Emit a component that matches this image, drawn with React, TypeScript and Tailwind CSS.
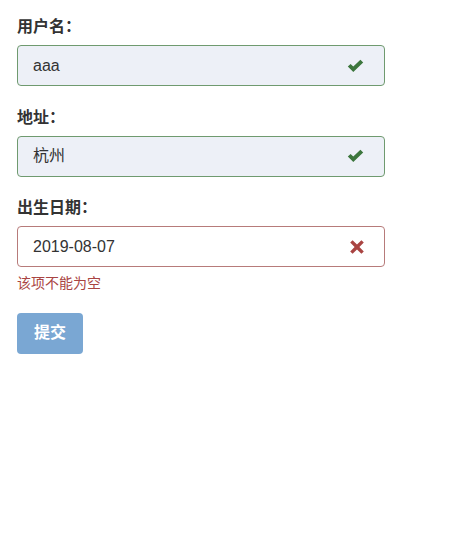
import React from 'react';

const font = { fontFamily: '"Liberation Sans", "Noto Sans CJK SC", sans-serif' };

const OkIcon = () => (
  <svg width="17" height="14" viewBox="0 0 17 14" className="text-[#3c763d]">
    <path d="M0.8 7.6 L3.6 4.9 L6.3 7.5 L13.4 0.8 L16.2 3.5 L6.3 12.9 Z" fill="currentColor" />
  </svg>
);

const RemoveIcon = () => (
  <svg width="14" height="14" viewBox="0 0 14 14" className="text-[#a94442]">
    <path d="M2.6 0.2 L7 4.6 L11.4 0.2 L13.8 2.6 L9.4 7 L13.8 11.4 L11.4 13.8 L7 9.4 L2.6 13.8 L0.2 11.4 L4.6 7 L0.2 2.6 Z" fill="currentColor" />
  </svg>
);

const Field = ({
  label,
  value,
  ok,
  error,
}: {
  label: string;
  value: string;
  ok: boolean;
  error?: string;
}) => (
  <div className="mb-[21.5px]">
    <label className="block text-[16px] leading-[20px] font-bold text-[#333] mb-[8px]">{label}</label>
    <div
      className={
        ok
          ? 'flex items-center h-[41px] rounded-[4px] border border-[#6f9a6f] bg-[#edf0f7] pl-[15px] pr-[20px]'
          : 'flex items-center h-[41px] rounded-[4px] border border-[#b77b7a] bg-white pl-[15px] pr-[20px]'
      }
    >
      <span className="flex-1 text-[16px] text-[#333]">{value}</span>
      {ok ? <OkIcon /> : <RemoveIcon />}
    </div>
    {error && <div className="mt-[6px] text-[14px] leading-[20px] text-[#a94442]">{error}</div>}
  </div>
);

export default function App() {
  return (
    <div className="min-h-screen bg-white pt-[17px] px-[17px]" style={font}>
      <div className="w-[368px]">
        <Field label="用户名：" value="aaa" ok />
        <Field label="地址：" value="杭州" ok />
        <Field label="出生日期：" value="2019-08-07" ok={false} error="该项不能为空" />
        <button className="mt-[-2px] h-[41px] px-[17px] rounded-[4px] bg-[#7aa7d3] text-white text-[16px] font-bold">
          提交
        </button>
      </div>
    </div>
  );
}
